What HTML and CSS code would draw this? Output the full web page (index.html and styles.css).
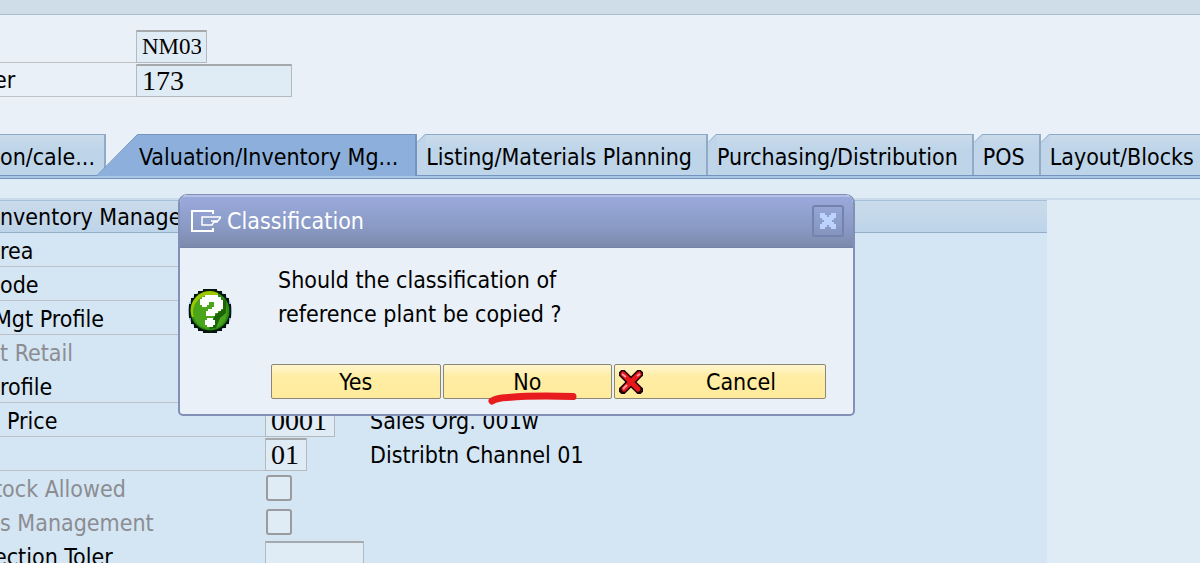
FILE: index.html
```
<!DOCTYPE html>
<html lang="en">
<head>
    <meta charset="UTF-8">
    <meta name="viewport" content="width=device-width, initial-scale=1.0">
    <title>Classification</title>
    <link rel="stylesheet" href="styles.css">
</head>
<body>
    <div class="toolbar"></div>

    <form class="header">
        <div class="header-row">
            <label for="plant">&nbsp;</label>
            <input class="field code" id="plant" type="text" value="NM03" readonly>
        </div>
        <div class="header-row">
            <label class="clip" for="customer">er</label>
            <input class="field long" id="customer" type="text" value="173" readonly>
        </div>
    </form>

    <nav class="tabs">
        <button class="tab first" type="button"><span>on/cale...</span></button>
        <button class="tab active" type="button">
            <svg width="42" height="42" viewBox="0 0 42 42"><path class="fill" d="M0 42L41 0h1v42z"/><path class="line" d="M0 41.500L40.500.5H42"/></svg>
            <span>Valuation/Inventory Mg...</span>
        </button>
        <button class="tab" type="button">
            <svg width="9" height="41" viewBox="0 0 9 41"><path class="fill" d="M0 41V9L8 0h1v41z"/><path class="line" d="M0 8.500L8 .5h1"/></svg>
            <span>Listing/Materials Planning</span>
        </button>
        <button class="tab" type="button">
            <svg width="9" height="41" viewBox="0 0 9 41"><path class="fill" d="M0 41V9L8 0h1v41z"/><path class="line" d="M0 8.500L8 .5h1"/></svg>
            <span>Purchasing/Distribution</span>
        </button>
        <button class="tab" type="button">
            <svg width="9" height="41" viewBox="0 0 9 41"><path class="fill" d="M0 41V9L8 0h1v41z"/><path class="line" d="M0 8.500L8 .5h1"/></svg>
            <span>POS</span>
        </button>
        <button class="tab" type="button">
            <svg width="9" height="41" viewBox="0 0 9 41"><path class="fill" d="M0 41V9L8 0h1v41z"/><path class="line" d="M0 8.500L8 .5h1"/></svg>
            <span>Layout/Blocks</span>
        </button>
    </nav>

    <main class="content">
        <form class="group">
            <h2>nventory Management</h2>
            <div class="row"><span class="label">rea</span></div>
            <div class="row"><span class="label">ode</span></div>
            <div class="row"><span class="label clip">Mgt Profile</span></div>
            <div class="row"><span class="label off">t Retail</span></div>
            <div class="row"><span class="label">rofile</span></div>
            <div class="row">
                <label class="label indent" for="salesOrg">Price</label>
                <span class="value"><input class="field four" id="salesOrg" type="text" value="0001" readonly></span>
                <span class="text">Sales Org. 001w</span>
            </div>
            <div class="row">
                <label class="label" for="channel">&nbsp;</label>
                <span class="value"><input class="field two" id="channel" type="text" value="01" readonly></span>
                <span class="text">Distribtn Channel 01</span>
            </div>
            <div class="row">
                <label class="label off clip" for="stock">tock Allowed</label>
                <input class="check" id="stock" type="checkbox" disabled>
            </div>
            <div class="row">
                <label class="label off" for="status">s Management</label>
                <input class="check" id="status" type="checkbox" disabled>
            </div>
            <div class="row">
                <label class="label clip" for="toler">ection Toler</label>
                <input class="field mid" id="toler" type="text" readonly>
            </div>
        </form>
    </main>

    <div class="dialog" role="dialog" aria-labelledby="dialogTitle">
        <div class="dialog-head">
            <svg width="32" height="24" viewBox="0 0 32 24" fill="none" stroke="#fff" stroke-width="2">
                <path d="M23 5V2H2v20h21v-3"/>
                <path d="M31 8H12v8h10l2-3h3l4-5M21 12h6" stroke-width="1.500"/>
            </svg>
            <h1 id="dialogTitle">Classification</h1>
            <button class="close" type="button" aria-label="Close">
                <svg width="18" height="18" viewBox="0 0 18 18"><path d="M1 1h5v2h2v2h2V3h2V1h5v5h-2v2h-2v2h2v2h2v5h-5v-2h-2v-2H8v2H6v2H1v-5h2v-2h2V8H3V6H1z" fill="#bcd3ff"/></svg>
            </button>
        </div>
        <div class="dialog-body">
            <svg class="question" width="44" height="44" viewBox="0 0 44 44">
                <circle cx="22" cy="22" r="22" fill="#86a8dc"/>
                <path d="M15 0h14v2h5v3h4v4h3v6h2v14h-2v6h-3v4h-4v3h-5v2H15v-2h-5v-3H6v-4H3v-6H1V15h2V9h3V5h4V2h5z" fill="#07160a"/>
                <circle cx="22" cy="22" r="19.500" fill="#2b8a14"/>
                <path d="M4 28A19 19 0 0 1 30 4v3L7 28z" fill="#9bc800"/>
                <circle cx="22" cy="23" r="17" fill="#4aa51a"/>
                <path d="M35 11h3v13l-6 5-4 10-7 1 6-14 8-6z" fill="#1c6408"/>
                <path d="M12 10h2V8h3V6h13v2h3v3h2v9h-2v2h-3v2h-3v3h-9v-5h2v-2h4v-2h2v-5h-5v3h-2v2h-5v-2h-2z" fill="#fff"/>
                <path d="M19 29h6v2h2v5h-2v2h-6v-2h-2v-5h2z" fill="#fff"/>
            </svg>
            <p>Should the classification of<br>reference plant be copied ?</p>
        </div>
        <div class="actions">
            <button type="button">Yes</button>
            <button type="button">No
                <svg class="mark" width="92" height="14" viewBox="0 0 92 14"><path d="M5 9Q10 6 20 5.500 48 3 86 4.500" fill="none" stroke="#e81c1f" stroke-width="7" stroke-linecap="round"/></svg>
            </button>
            <button class="cancel" type="button">
                <svg width="24" height="24" viewBox="0 0 24 24" fill="none">
                    <path d="M4 4l16 16M20 4L4 20" stroke="#1c0506" stroke-width="8" stroke-linecap="square" stroke-linejoin="bevel"/>
                    <path d="M4 4l15 15M20 4L5 19" stroke="#e9161b" stroke-width="5" stroke-linecap="round"/>
                    <path d="M3 4l4 3M18 6l3-2M4 19l4-4" stroke="#ff9a98" stroke-width="2"/>
                </svg>
                <span>Cancel</span>
            </button>
        </div>
    </div>
</body>
</html>
```
FILE: styles.css
```
* {
    box-sizing: border-box;
}
body {
    margin: 0;
    height: 100vh;
    overflow: hidden;
    position: relative;
    display: flex;
    flex-direction: column;
    background: #e9f0f7;
    color: #000;
    font-family: "DejaVu Sans Condensed", "Noto Sans", sans-serif;
    font-size: 23px;
    line-height: 32px;
}
button, h1, h2 {
    font: inherit;
    color: inherit;
    margin: 0;
}
.toolbar {
    flex: none;
    height: 15px;
    background: #cfdde8;
    border-bottom: 1px solid #a9bccb;
}
.header {
    padding: 15px 0 36px;
}
.header-row {
    display: flex;
    height: 34px;
}
.header-row label {
    width: 136px;
    height: 33px;
    border-bottom: 1px solid #bfc3c7;
}
.field {
    height: 33px;
    padding: 0 5px;
    border: 1px solid #b4b9bd;
    border-top: 2px solid #a5a9ac;
    border-radius: 1px;
    background: #dfebf5;
    font-family: "Liberation Serif", serif;
    font-size: 28px;
    outline: none;
}
.code {
    width: 71px;
    font-size: 23px;
}
.four {
    width: 70px;
}
.two {
    width: 42px;
}
.mid {
    width: 99px;
}
.long {
    width: 156px;
}

/* tab strip */
.tabs {
    flex: none;
    display: flex;
    height: 45px;
    border-bottom: 1px solid #7395bf;
    background: linear-gradient(#7395bf, #7395bf) 0 41px / 100% 1px no-repeat,
        linear-gradient(#a9c6e4, #a9c6e4) 0 42px / 100% 2px no-repeat;
}
.tab {
    flex: none;
    display: flex;
    height: 41px;
    padding: 0;
    border: 0;
    background: none;
    white-space: nowrap;
}
.tab span {
    height: 41px;
    padding: 6px 14px 0 0;
    border-top: 1px solid #8ba9c8;
    border-right: 2px solid #90abc6;
    background: linear-gradient(#cadbea, #bdd4e9 40%, #bdd4e9);
}
.tab svg {
    flex: none;
}
.tab .fill {
    fill: #c0d5e9;
}
.tab .line {
    fill: none;
    stroke: #8ba9c8;
}
.first span {
    padding-right: 9px;
}
.active {
    height: 42px;
    margin-left: -9px;
    z-index: 1;
}
.active span {
    height: 42px;
    padding-right: 17px;
    border-color: #7395bf;
    background: #8cb0db;
}
.active .fill {
    fill: #8cb0db;
}
.active .line {
    stroke: #7395bf;
}

.content {
    flex: 1;
    min-height: 0;
    padding-top: 19px;
    background: #dfebf5;
}
.content::before {
    content: "";
    display: block;
    height: 2px;
    background: #cbdbe9;
}
.group {
    width: 87.25%;
    background: #d4e5f3;
}
.group h2 {
    height: 33px;
    border-top: 1px solid #a4c0dc;
    border-bottom: 1px solid #93afca;
    background: linear-gradient(#cadbea, #bdd4e9);
}
.row {
    display: flex;
    align-items: center;
    height: 34px;
}
.label {
    width: 265px;
    height: 34px;
    padding-top: 2px;
    border-bottom: 1px solid #bbc1c6;
}
.text {
    padding-top: 2px;
}
.indent {
    padding-left: 7px;
}
.clip {
    text-indent: -6px;
}
.off {
    color: #8b8d92;
    border-color: transparent;
}
.value {
    display: flex;
    width: 105px;
}
.row .mid {
    align-self: flex-end;
    height: 32px;
}
.check {
    appearance: none;
    width: 26px;
    height: 26px;
    margin: 0 1px;
    border: 2px solid #999b9e;
    border-radius: 3px;
    background: #dfebf5;
}

.dialog {
    position: absolute;
    left: 178px;
    top: 194px;
    width: 677px;
    border: 2px solid #8290b8;
    border-top-width: 1px;
    border-radius: 9px 9px 5px 5px;
    background: #e9f0f7;
    overflow: hidden;
}
.dialog-head {
    display: flex;
    align-items: center;
    gap: 5px;
    height: 53px;
    padding: 0 9px 3px 10px;
    border-top: 2px solid #b4c1e6;
    border-bottom: 1px solid #7484a6;
    background: linear-gradient(#9aa9dc, #8a9ac5 60%, #7b8aab);
    color: #fff;
}
.dialog-head h1 {
    flex: 1;
}
.close {
    display: grid;
    place-items: center;
    width: 32px;
    height: 32px;
    padding: 0;
    border: 2px solid #7383ae;
    border-radius: 3px;
    background: transparent;
}
.dialog-body {
    display: flex;
    gap: 46px;
    padding: 15px 8px 0;
}
.question {
    margin-top: 26px;
}
.dialog-body p {
    margin: 0;
    line-height: 34px;
}
.actions {
    display: grid;
    grid-template-columns: 4fr 4fr 5fr;
    gap: 2px;
    padding: 31px 27px 15px 91px;
}
.actions button {
    position: relative;
    height: 35px;
    padding: 0;
    border: 1px solid #8b8775;
    border-radius: 2px;
    background: linear-gradient(#fff6cf, #ffeda4 35%, #ffeb9c);
}
.actions .cancel {
    display: flex;
    align-items: center;
    padding-left: 4px;
}
.cancel span {
    flex: 1;
    padding-left: 14px;
}
.mark {
    position: absolute;
    left: 43px;
    top: 27px;
}
```
